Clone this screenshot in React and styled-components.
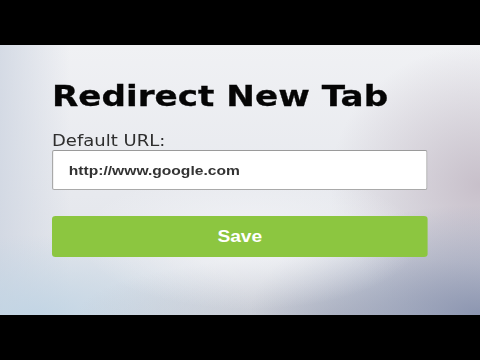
import React from "react";
import styled, { createGlobalStyle } from "styled-components";

const GlobalStyle = createGlobalStyle`
  html, body {
    margin: 0;
    padding: 0;
    background: #000;
  }
`;

// the source video is stretched sideways, so the options card is too
const STRETCH = 1.2;

export default function App() {
  return (
    <>
      <GlobalStyle />
      <Screen>
        <Letterbox />
        <Stage>
          <Card>
            <Title>Redirect New Tab</Title>
            <Label htmlFor="default-url">Default URL:</Label>
            <UrlInput id="default-url" type="text" defaultValue="http://www.google.com" />
            <SaveButton type="button">Save</SaveButton>
          </Card>
        </Stage>
        <Letterbox />
      </Screen>
    </>
  );
}

const Screen = styled.div`
  width: 480px;
  height: 360px;
  display: flex;
  flex-direction: column;
  overflow: hidden;
`;

const Letterbox = styled.div`
  height: 45px;
  flex: none;
  background: #000;
`;

const Stage = styled.div`
  flex: 1;
  padding: 37px 0 0 52px;
  box-sizing: border-box;
  background:
    radial-gradient(ellipse 170px 70px at 52% 72%, rgba(244, 245, 248, 0.85), rgba(244, 245, 248, 0) 100%),
    radial-gradient(ellipse 230px 110px at 100% 100%, rgba(136, 146, 174, 0.95), rgba(136, 146, 174, 0) 100%),
    radial-gradient(ellipse 150px 140px at 100% 52%, rgba(196, 187, 198, 0.9), rgba(196, 187, 198, 0) 100%),
    radial-gradient(ellipse 260px 60px at 70% 100%, rgba(180, 184, 196, 0.7), rgba(180, 184, 196, 0) 100%),
    radial-gradient(ellipse 220px 80px at 8% 100%, rgba(192, 212, 228, 0.9), rgba(192, 212, 228, 0) 100%),
    linear-gradient(90deg, rgba(206, 213, 225, 0.8) 0, rgba(206, 213, 225, 0) 70px),
    linear-gradient(180deg, #f0f1f4 0%, #e7e9ee 55%, #dfe2e8 100%);
`;

const Card = styled.div`
  width: 313px;
  display: flex;
  flex-direction: column;
  transform: scaleX(${STRETCH});
  transform-origin: left top;
`;

const Title = styled.h1`
  margin: 0 0 23px;
  font-family: "DejaVu Sans", Verdana, sans-serif;
  font-size: 28.5px;
  font-weight: bold;
  line-height: 29px;
  color: #050505;
  white-space: nowrap;
  -webkit-text-stroke: 0.3px #050505;
`;

const Label = styled.label`
  margin-bottom: 1px;
  font-family: "DejaVu Sans", Verdana, sans-serif;
  font-size: 15px;
  line-height: 15px;
  color: #2e2e2e;
`;

const UrlInput = styled.input`
  height: 40px;
  box-sizing: border-box;
  margin: 0;
  padding: 0 0 0 13px;
  border: 1px solid #a9a9a9;
  border-top-color: #9a9a9a;
  border-radius: 2px;
  background: #fff;
  font-family: "Liberation Sans", Arial, sans-serif;
  font-size: 13px;
  font-weight: bold;
  color: #333;
  outline: none;
`;

const SaveButton = styled.button`
  margin-top: 26px;
  height: 41px;
  border: none;
  border-radius: 3px;
  background: #8cc640;
  color: #fff;
  font-family: "Liberation Sans", Arial, sans-serif;
  font-size: 16px;
  font-weight: bold;
  cursor: pointer;
`;
